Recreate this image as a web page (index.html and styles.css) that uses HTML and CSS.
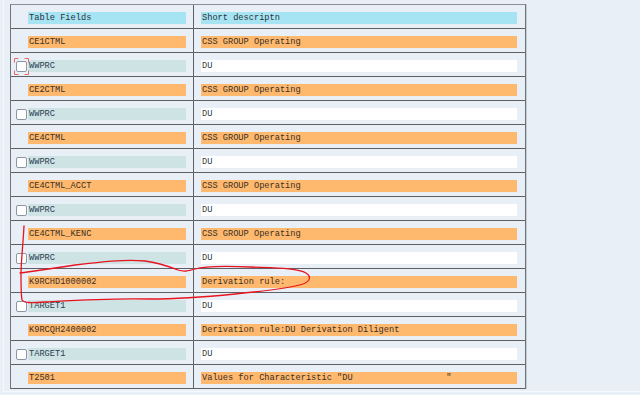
FILE: index.html
```html
<!DOCTYPE html>
<html>
<head>
<meta charset="utf-8">
<link rel="stylesheet" href="styles.css">
</head>
<body>
<div class="panel">
  <div class="table">
    <div class="row">
      <div class="cell left"><span class="slot"></span><span class="box cyan">Table Fields</span></div>
      <div class="cell right"><span class="box cyan">Short descriptn</span></div>
    </div>
    <div class="row">
      <div class="cell left"><span class="slot"></span><span class="box orange">CE1CTML</span></div>
      <div class="cell right"><span class="box orange">CSS GROUP Operating</span></div>
    </div>
    <div class="row">
      <div class="cell left"><span class="slot"><span class="cb"></span><svg class="focus" width="15" height="17" viewBox="0 0 15 17"><path d="M0.5 4.5V0.5H4.5M10.5 0.5H14.5V4.5M14.5 12.5V16.5H10.5M4.5 16.5H0.5V12.5" fill="none" stroke="#e46a6a" stroke-width="1"/></svg></span><span class="box teal">WWPRC</span></div>
      <div class="cell right"><span class="box white">DU</span></div>
    </div>
    <div class="row">
      <div class="cell left"><span class="slot"></span><span class="box orange">CE2CTML</span></div>
      <div class="cell right"><span class="box orange">CSS GROUP Operating</span></div>
    </div>
    <div class="row">
      <div class="cell left"><span class="slot"><span class="cb"></span></span><span class="box teal">WWPRC</span></div>
      <div class="cell right"><span class="box white">DU</span></div>
    </div>
    <div class="row">
      <div class="cell left"><span class="slot"></span><span class="box orange">CE4CTML</span></div>
      <div class="cell right"><span class="box orange">CSS GROUP Operating</span></div>
    </div>
    <div class="row">
      <div class="cell left"><span class="slot"><span class="cb"></span></span><span class="box teal">WWPRC</span></div>
      <div class="cell right"><span class="box white">DU</span></div>
    </div>
    <div class="row">
      <div class="cell left"><span class="slot"></span><span class="box orange">CE4CTML_ACCT</span></div>
      <div class="cell right"><span class="box orange">CSS GROUP Operating</span></div>
    </div>
    <div class="row">
      <div class="cell left"><span class="slot"><span class="cb"></span></span><span class="box teal">WWPRC</span></div>
      <div class="cell right"><span class="box white">DU</span></div>
    </div>
    <div class="row">
      <div class="cell left"><span class="slot"></span><span class="box orange">CE4CTML_KENC</span></div>
      <div class="cell right"><span class="box orange">CSS GROUP Operating</span></div>
    </div>
    <div class="row">
      <div class="cell left"><span class="slot"><span class="cb"></span></span><span class="box teal">WWPRC</span></div>
      <div class="cell right"><span class="box white">DU</span></div>
    </div>
    <div class="row">
      <div class="cell left"><span class="slot"></span><span class="box orange">K9RCHD1000002</span></div>
      <div class="cell right"><span class="box orange">Derivation rule:</span></div>
    </div>
    <div class="row">
      <div class="cell left"><span class="slot"><span class="cb"></span></span><span class="box teal">TARGET1</span></div>
      <div class="cell right"><span class="box white">DU</span></div>
    </div>
    <div class="row">
      <div class="cell left"><span class="slot"></span><span class="box orange">K9RCQH2400002</span></div>
      <div class="cell right"><span class="box orange">Derivation rule:DU Derivation Diligent</span></div>
    </div>
    <div class="row">
      <div class="cell left"><span class="slot"><span class="cb"></span></span><span class="box teal">TARGET1</span></div>
      <div class="cell right"><span class="box white">DU</span></div>
    </div>
    <div class="row">
      <div class="cell left"><span class="slot"></span><span class="box orange">T2501</span></div>
      <div class="cell right"><span class="box orange">Values for Characteristic "DU                  "</span></div>
    </div>
  </div>
</div>
<svg class="scribble" width="640" height="395" viewBox="0 0 640 395">
  <path d="M24 226 C23 245 21 262 21 275 C21 286 21 295 22 300 C24 303 30 303 45 302 C80 300 110 298 150 299 C180 299 205 297 235 294 C265 291 290 288 303 284 C311 281 311 276 306 273 C298 268 275 268 250 267 C225 266 205 266 195 269 C188 271 184 272 178 270 C170 267 160 263 145 261 C125 259 100 262 75 265 C55 268 35 271 20 273" fill="none" stroke="#e8141e" stroke-width="1.3" stroke-linecap="round" stroke-linejoin="round"/>
</svg>
</body>
</html>
```

FILE: styles.css
```css
html, body {
  margin: 0;
  padding: 0;
}
body {
  background: #e9eff7;
  width: 640px;
  height: 395px;
  overflow: hidden;
  position: relative;
  font-family: "Liberation Mono", "DejaVu Sans Mono", monospace;
}
.panel {
  margin-left: 3px;
  height: 392px;
  border-left: 1px solid #f4f7fb;
  border-bottom: 1px solid #f4f7fb;
  padding-top: 4px;
  padding-left: 6px;
  box-sizing: border-box;
}
.table {
  width: 516px;
  border-top: 1px solid #8a8f96;
  border-left: 1px solid #6f747a;
  border-right: 1px solid #6f747a;
  box-shadow: 1px 0 0 #c6ccd4;
  box-sizing: border-box;
}
.row {
  display: flex;
  height: 24px;
  border-bottom: 1px solid #5d6166;
  box-sizing: border-box;
}
.cell {
  display: flex;
  align-items: flex-start;
  padding-top: 7px;
  box-sizing: border-box;
}
.left {
  width: 183px;
  padding-left: 5px;
  border-right: 1px solid #5d6166;
}
.right {
  width: 331px;
  padding-left: 7px;
}
.slot {
  position: relative;
  width: 12px;
  height: 12px;
  flex: none;
}
.cb {
  position: absolute;
  left: 0;
  top: 1px;
  width: 11px;
  height: 11px;
  box-sizing: border-box;
  background: #ffffff;
  border: 1px solid #8a98a6;
  border-radius: 2px;
}
.focus {
  position: absolute;
  left: -2px;
  top: -2px;
}
.box {
  display: block;
  height: 12px;
  line-height: 12px;
  font-size: 8.67px;
  padding-left: 1px;
  white-space: pre;
  overflow: hidden;
  box-sizing: border-box;
  color: #2e2e2e;
}
.left .box {
  width: 158px;
}
.right .box {
  width: 316px;
}
.cyan {
  background: #a6e4f4;
  color: #2a3338;
}
.orange {
  background: #ffb96e;
  color: #3a3026;
}
.teal {
  background: #cde3e4;
  color: #2c3e52;
}
.white {
  background: #ffffff;
  color: #333a44;
}
.scribble {
  position: absolute;
  left: 0;
  top: 0;
  pointer-events: none;
}
```
